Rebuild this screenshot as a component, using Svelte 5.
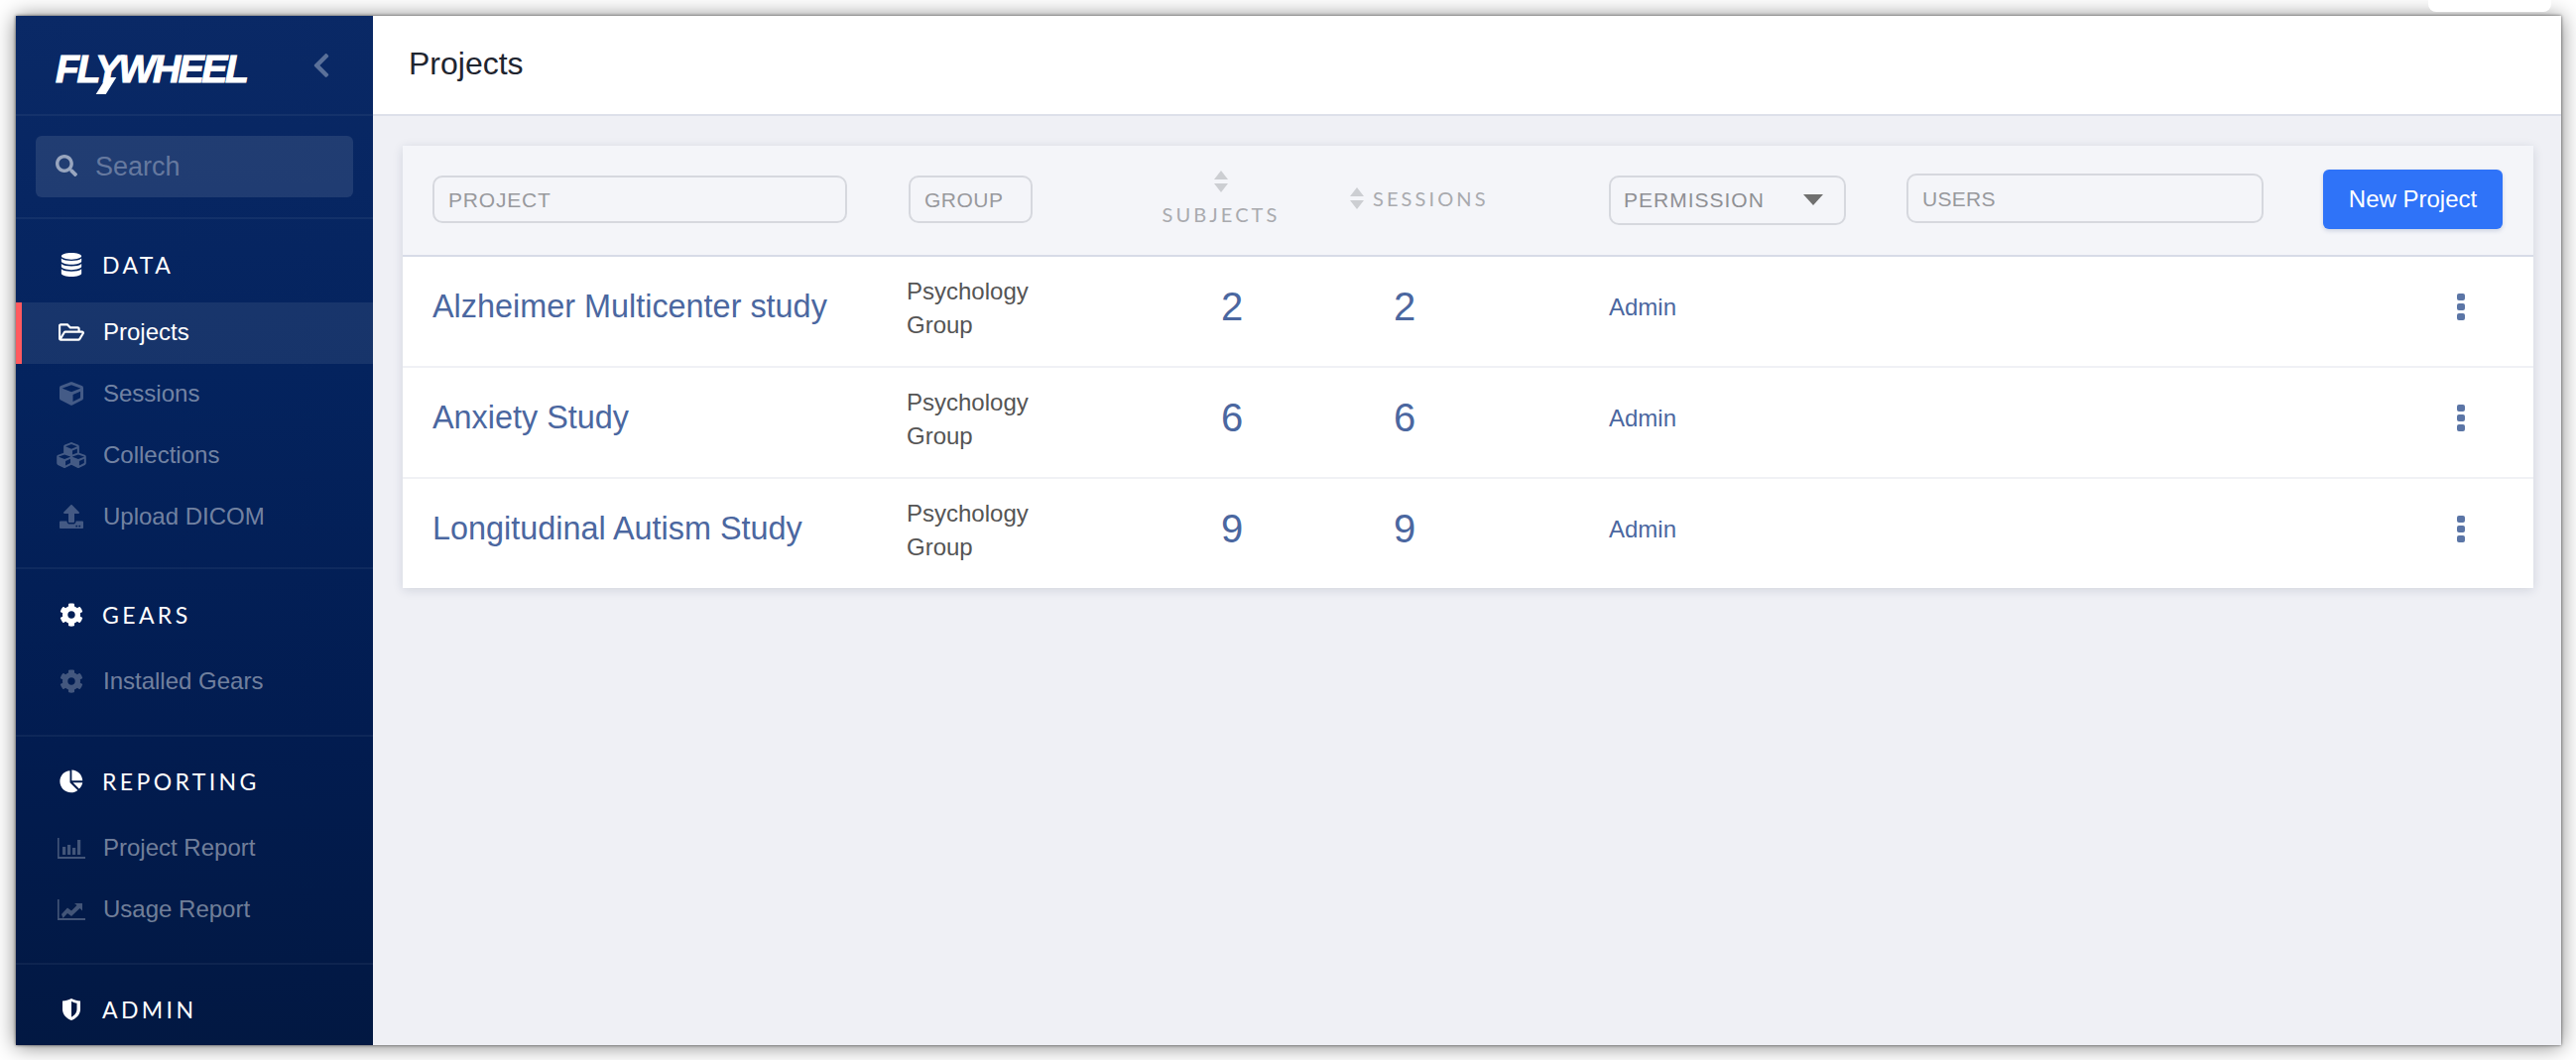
<script>
  const rows = [
    { name: 'Alzheimer Multicenter study', n: 2 },
    { name: 'Anxiety Study', n: 6 },
    { name: 'Longitudinal Autism Study', n: 9 }
  ];
  const P = {
    folder: ['0 64 576 384', 'M527.9 224H480v-48c0-26.5-21.5-48-48-48H272l-64-64H48C21.5 64 0 85.5 0 112v288c0 26.5 21.5 48 48 48h400c16.5 0 31.9-8.5 40.7-22.6l79.9-128c20-31.9-3-73.4-40.7-73.4zM48 118c0-3.3 2.7-6 6-6h134.1l64 64H426c3.3 0 6 2.7 6 6v42H152c-16.8 0-32.4 8.8-41.1 23.2L48 351.4zm400 282H72l77.2-128H528z'],
    cube: ['0 0 512 512', 'M239.1 6.3l-208 78c-18.7 7-31.1 25-31.1 45v225.1c0 18.2 10.3 34.8 26.5 42.9l208 104c13.5 6.8 29.4 6.8 42.9 0l208-104c16.3-8.1 26.5-24.8 26.5-42.9V129.3c0-20-12.4-37.9-31.1-44.9l-208-78C262 2.2 250 2.2 239.1 6.3zM256 68.4l192 72v1.1l-192 78-192-78v-1.1l192-72zm32 356V275.5l160-65v133.9l-160 80z'],
    cubes: ['0 30 512 450', 'M488.6 250.2L392 214V105.5c0-15-9.3-28.4-23.4-33.7l-100-37.5c-8.1-3.1-17.1-3.1-25.3 0l-100 37.5c-14.1 5.3-23.4 18.7-23.4 33.7V214l-96.6 36.2C9.3 255.5 0 268.9 0 283.9V394c0 13.6 7.7 26.1 19.9 32.2l100 50c10.1 5.1 22.1 5.1 32.2 0l103.9-52 103.9 52c10.1 5.1 22.1 5.1 32.2 0l100-50c12.2-6.1 19.9-18.6 19.9-32.2V283.9c0-15-9.3-28.4-23.4-33.7zM358 214.8l-85 31.9v-68.2l85-37v73.3zM154 104.1l102-38.2 102 38.2v.6l-102 41.4-102-41.4v-.6zm84 291.1l-85 42.5v-79.1l85-38.8v75.4zm0-112l-102 41.4-102-41.4v-.6l102-38.2 102 38.2v.6zm240 112l-85 42.5v-79.1l85-38.8v75.4zm0-112l-102 41.4-102-41.4v-.6l102-38.2 102 38.2v.6z'],
    upload: ['0 0 512 512', 'M296 384h-80c-13.3 0-24-10.7-24-24V192h-87.7c-17.8 0-26.7-21.5-14.1-34.1L242.3 5.7c7.5-7.5 19.8-7.5 27.3 0l152.2 152.2c12.6 12.6 3.7 34.1-14.1 34.1H320v168c0 13.3-10.7 24-24 24zm216-8v112c0 13.3-10.7 24-24 24H24c-13.3 0-24-10.7-24-24V376c0-13.3 10.7-24 24-24h136v8c0 30.9 25.1 56 56 56h80c30.9 0 56-25.1 56-56v-8h136c13.3 0 24 10.7 24 24zm-124 88c0-11-9-20-20-20s-20 9-20 20 9 20 20 20 20-9 20-20zm64 0c0-11-9-20-20-20s-20 9-20 20 9 20 20 20 20-9 20-20z'],
    cog: ['0 0 512 512', 'M487.4 315.7l-42.6-24.6c4.3-23.2 4.3-47 0-70.2l42.6-24.6c4.9-2.8 7.1-8.6 5.5-14-11.1-35.6-30-67.8-54.7-94.6-3.8-4.1-10-5.1-14.8-2.3L380.8 110c-17.9-15.4-38.5-27.3-60.8-35.1V25.8c0-5.6-3.9-10.5-9.4-11.7-36.7-8.2-74.3-7.8-109.2 0-5.5 1.2-9.4 6.1-9.4 11.7V75c-22.2 7.9-42.8 19.8-60.8 35.1L88.7 85.5c-4.9-2.8-11-1.9-14.8 2.3-24.7 26.7-43.6 58.9-54.7 94.6-1.7 5.4.6 11.2 5.5 14L67.3 221c-4.3 23.2-4.3 47 0 70.2l-42.6 24.6c-4.9 2.8-7.1 8.6-5.5 14 11.1 35.6 30 67.8 54.7 94.6 3.8 4.1 10 5.1 14.8 2.3l42.6-24.6c17.9 15.4 38.5 27.3 60.8 35.1v49.2c0 5.6 3.9 10.5 9.4 11.7 36.7 8.2 74.3 7.8 109.2 0 5.5-1.2 9.4-6.1 9.4-11.7v-49.2c22.2-7.9 42.8-19.8 60.8-35.1l42.6 24.6c4.9 2.8 11 1.9 14.8-2.3 24.7-26.7 43.6-58.9 54.7-94.6 1.5-5.5-.7-11.3-5.6-14.1zM256 336c-44.1 0-80-35.9-80-80s35.9-80 80-80 80 35.9 80 80-35.9 80-80 80z'],
    pie: ['0 0 512 512', 'M224 24C100 28 8 132 8 256c0 128 104 240 240 240 54 0 104-18 144-50L224 280zM264 8v232h232C492 112 392 12 264 8zM288 280l134 134c36-34 66-84 74-134z'],
    bars: ['0 0 28 21', 'M0 0h1.600v19H28v2H0zM5 9h3.200v8H5zM10 7h3.200v10H10zM15 10h3.200v7H15zM20 2h3.200v15H20z'],
    line: ['0 0 28 21', 'M0 0h1.600v19H28v2H0zM4 15l6-6.500 4 3 5.500-5.500-2.500-2h8v7.500l-2.500-2.500-8.500 8-4-3-4.500 5z'],
    shield: ['0 0 18 22', 'M0 2.500C3 2.500 6 1.500 9 0c3 1.500 6 2.500 9 2.500V11c0 5-4 9-9 11-5-2-9-6-9-11zM9 2.800v16c3-1.500 5.500-4.500 5.500-8V4.800C12.500 4.500 10.500 3.700 9 2.800z'],
    db: ['0 0 24 26', 'M12 0c6 0 11 1.600 11 3.600S18 7.200 12 7.200 1 5.600 1 3.600 6 0 12 0zM1 6c2 2 6.500 2.700 11 2.700S21 8 23 6v3.200c0 2-5 3.600-11 3.600S1 11.200 1 9.200zM1 11.800c2 2 6.500 2.700 11 2.700s9-.7 11-2.700V15c0 2-5 3.600-11 3.600S1 17 1 15zM1 17.600c2 2 6.500 2.700 11 2.700s9-.7 11-2.700v4.800C23 24.400 18 26 12 26S1 24.400 1 22.400z']
  };
  const sections = [
    { title: 'DATA', icon: 'db', items: [
      { label: 'Projects', icon: 'folder', active: true },
      { label: 'Sessions', icon: 'cube' },
      { label: 'Collections', icon: 'cubes' },
      { label: 'Upload DICOM', icon: 'upload' }
    ] },
    { title: 'GEARS', icon: 'cog', items: [{ label: 'Installed Gears', icon: 'cog' }] },
    { title: 'REPORTING', icon: 'pie', items: [
      { label: 'Project Report', icon: 'bars' },
      { label: 'Usage Report', icon: 'line' }
    ] },
    { title: 'ADMIN', icon: 'shield', items: [] }
  ];
</script>

<div class="page">
  <div class="tab"></div>
  <div class="window">
    <aside class="sidebar">
      <div class="brand">
        <span class="logo">FLYWHEEL</span>
        <svg class="chevron" viewBox="0 0 320 512"><path d="M34.52 239.03L228.87 44.69c9.37-9.37 24.57-9.37 33.94 0l22.67 22.67c9.36 9.36 9.37 24.52.04 33.9L131.49 256l154.02 154.75c9.34 9.38 9.32 24.54-.04 33.9l-22.67 22.67c-9.37 9.37-24.57 9.37-33.94 0L34.52 272.97c-9.37-9.37-9.37-24.57 0-33.94z"/></svg>
      </div>
      <div class="search-wrap">
        <div class="search">
          <svg class="search-icon" viewBox="0 0 512 512"><path d="M505 442.7L405.3 343c-4.5-4.5-10.6-7-17-7H372c27.6-35.3 44-79.7 44-128C416 93.1 322.9 0 208 0S0 93.1 0 208s93.1 208 208 208c48.3 0 92.7-16.4 128-44v16.3c0 6.4 2.5 12.5 7 17l99.7 99.7c9.4 9.4 24.6 9.4 33.9 0l28.3-28.3c9.4-9.4 9.4-24.6.1-34zM208 336c-70.7 0-128-57.2-128-128 0-70.7 57.2-128 128-128 70.7 0 128 57.2 128 128 0 70.7-57.2 128-128 128z"/></svg>
          <span>Search</span>
        </div>
      </div>
      {#each sections as s}
        <section class="nav-section">
          <div class="nav-head">
            <span class="ico"><svg class="ico-{s.icon}" viewBox={P[s.icon][0]}><path d={P[s.icon][1]}/></svg></span>
            <span class="nav-title">{s.title}</span>
          </div>
          {#each s.items as it}
            <div class="nav-item" class:active={it.active}>
              <span class="ico"><svg class="ico-{it.icon}" viewBox={P[it.icon][0]}><path d={P[it.icon][1]}/></svg></span>
              <span>{it.label}</span>
            </div>
          {/each}
        </section>
      {/each}
    </aside>

    <main class="main">
      <header class="topbar">Projects</header>
      <div class="card">
        <div class="grid head">
          <div class="cell"><div class="field f-project">PROJECT</div></div>
          <div class="cell"><div class="field f-group">GROUP</div></div>
          <div class="sort-stack">
            <svg class="sort" viewBox="0 0 14 22"><path d="M7 0l7 9H0zM7 22L0 13h14z"/></svg>
            <span class="sort-label">SUBJECTS</span>
          </div>
          <div class="sort-inline">
            <svg class="sort" viewBox="0 0 14 22"><path d="M7 0l7 9H0zM7 22L0 13h14z"/></svg>
            <span class="sort-label">SESSIONS</span>
          </div>
          <div class="cell perm-cell">
            <div class="field f-perm"><span>PERMISSION</span><i class="caret"></i></div>
          </div>
          <div class="cell"><div class="field f-users">USERS</div></div>
          <button class="new">New Project</button>
        </div>
        {#each rows as r}
          <div class="grid row">
            <a class="name" href="#top">{r.name}</a>
            <div class="group">Psychology<br />Group</div>
            <div class="num">{r.n}</div>
            <div class="num">{r.n}</div>
            <div class="perm">Admin</div>
            <div></div>
            <div class="kebab"><i></i><i></i><i></i></div>
          </div>
        {/each}
      </div>
    </main>
  </div>
</div>

<style>
  :global(body) { margin: 0; background: #fff; }
  .page {
    position: relative;
    box-sizing: border-box;
    width: 2597px;
    height: 1069px;
    padding: 16px 15px 15px 16px;
    overflow: hidden;
    font-family: "Liberation Sans", Arial, sans-serif;
  }
  .tab {
    position: absolute;
    top: 0;
    left: 2448px;
    width: 124px;
    height: 12px;
    background: #fff;
    border-radius: 0 0 8px 8px;
    z-index: 2;
  }
  .window {
    display: flex;
    height: 100%;
    background: #eff0f5;
    box-shadow: 0 0 3px rgba(0,0,0,.6), 0 1px 20px rgba(0,0,0,.5);
  }
  .sidebar {
    flex: 0 0 360px;
    background: linear-gradient(178deg, #0a2966 0%, #04235e 35%, #021c50 70%, #021842 100%);
    color: #fff;
  }
  .brand {
    box-sizing: border-box;
    height: 101px;
    display: flex;
    align-items: flex-start;
    justify-content: space-between;
    padding: 32px 40px 0 40px;
    border-bottom: 2px solid rgba(255,255,255,.05);
  }
  .logo {
    position: relative;
    font: italic 700 39px/44px "Liberation Sans", Arial, sans-serif;
    letter-spacing: -2.4px;
    -webkit-text-stroke: 1.1px #fff;
    color: #fff;
  }
  .logo::after {
    content: "";
    position: absolute;
    left: 46px;
    top: 30px;
    width: 10px;
    height: 17px;
    background: #fff;
    transform: skewX(-32deg);
  }
  .chevron { width: 26px; height: 28px; margin: 4px -1px 0 0; fill: #5a7099; }
  .search-wrap {
    box-sizing: border-box;
    height: 104px;
    padding: 20px;
    border-bottom: 2px solid rgba(255,255,255,.05);
  }
  .search {
    height: 62px;
    display: flex;
    align-items: center;
    gap: 18px;
    padding-left: 20px;
    background: rgba(255,255,255,.1);
    border-radius: 6px;
    color: #66799f;
    font-size: 27px;
  }
  .search-icon { width: 22px; height: 22px; fill: #99a6bf; margin-top: -2px; }
  .nav-section {
    box-sizing: border-box;
    padding: 14px 0 22px;
    border-bottom: 2px solid rgba(255,255,255,.05);
  }
  .nav-section:nth-of-type(1) { padding: 15px 0 19px; }
  .nav-section:nth-of-type(2) { padding-top: 15px; }
  .nav-section:last-child { border-bottom: 0; padding-bottom: 0; }
  .nav-head {
    height: 62px;
    margin-bottom: 6px;
    display: flex;
    align-items: center;
    color: #fff;
  }
  .nav-section:nth-of-type(1) .nav-head { margin-bottom: 7px; }
  .nav-head .ico { flex-basis: 87px; width: 87px; }
  .nav-title {
    font-family: Lato, sans-serif;
    font-size: 23px;
    letter-spacing: 3.4px;
  }
  .ico {
    flex: 0 0 88px;
    box-sizing: border-box;
    padding-left: 24px;
    display: flex;
    justify-content: center;
    width: 88px;
  }
  .ico svg { width: 24px; height: 24px; fill: currentColor; display: block; }
  .ico svg.ico-folder { width: 26px; height: 18px; }
  .ico svg.ico-bars, .ico svg.ico-line { width: 28px; height: 21px; }
  .ico svg.ico-cubes { width: 30px; height: 26px; }
  .ico svg.ico-shield { width: 18px; height: 22px; }
  .nav-item {
    box-sizing: border-box;
    height: 62px;
    padding-bottom: 2px;
    display: flex;
    align-items: center;
    font-size: 24px;
    color: rgba(255,255,255,.45);
  }
  .nav-item .ico { color: rgba(255,255,255,.26); }
  .nav-item.active {
    background: rgba(255,255,255,.08);
    color: #fff;
    box-shadow: inset 6px 0 0 #ff5a5f;
  }
  .nav-item.active .ico { color: #fff; }
  .main { flex: 1; min-width: 0; }
  .topbar {
    box-sizing: border-box;
    height: 101px;
    background: #fff;
    border-bottom: 2px solid #dde0ea;
    padding: 30px 0 0 36px;
    font-size: 32px;
    line-height: 36px;
    color: #1f2530;
  }
  .card {
    margin: 30px 28px 0 30px;
    background: #fff;
    box-shadow: 0 2px 10px rgba(30,40,80,.14);
  }
  .grid {
    display: grid;
    grid-template-columns: 478px 226px 204px 144px 434px 420px 181px;
    padding: 0 31px 0 30px;
    align-items: center;
  }
  .head {
    height: 110px;
    background: #f4f5f9;
    border-bottom: 2px solid #d7dbe7;
  }
  .row {
    box-sizing: content-box;
    height: 100px;
    padding-bottom: 10px;
    border-bottom: 2px solid #f0f1f5;
  }
  .row:last-child { border-bottom: 0; }
  .field {
    box-sizing: border-box;
    height: 48px;
    display: flex;
    align-items: center;
    border: 2px solid #d6d8de;
    border-radius: 10px;
    padding-left: 14px;
    color: #98999d;
    font-size: 21px;
    letter-spacing: .8px;
    margin-bottom: 2px;
  }
  .f-project { width: 418px; padding-top: 1px; }
  .f-group { width: 125px; margin-left: 2px; letter-spacing: .5px; padding-top: 1px; }
  .perm-cell { padding-left: 134px; }
  .f-perm {
    width: 239px;
    height: 50px;
    margin-bottom: 0;
    letter-spacing: 1px;
    justify-content: space-between;
    padding: 0 21px 0 13px;
    color: #8f9094;
  }
  .caret {
    width: 0;
    height: 0;
    border-left: 10px solid transparent;
    border-right: 10px solid transparent;
    border-top: 11px solid #707070;
    margin-top: -2px;
  }
  .f-users { width: 360px; height: 50px; margin-bottom: 4px; letter-spacing: .3px; padding-top: 2px; }
  .sort { width: 14px; height: 22px; fill: #ccced2; flex: none; }
  .sort-label {
    font-family: Lato, sans-serif;
    font-size: 20px;
    letter-spacing: 3.1px;
    color: #a9aaae;
    white-space: nowrap;
  }
  .sort-stack {
    display: flex;
    flex-direction: column;
    align-items: center;
    gap: 10px;
    margin-right: 22px;
    margin-top: -4px;
  }
  .sort-inline {
    display: flex;
    align-items: center;
    gap: 9px;
    padding-left: 17px;
    margin-bottom: 5px;
    white-space: nowrap;
  }
  .new {
    height: 60px;
    width: 181px;
    padding: 0;
    margin-bottom: 2px;
    border: 0;
    border-radius: 6px;
    background: #2f73f8;
    color: #fff;
    font: 24px "Liberation Sans", Arial, sans-serif;
    box-shadow: 0 2px 4px rgba(40,60,120,.18);
  }
  .name {
    font-size: 32.4px;
    color: #4b67a0;
    text-decoration: none;
    white-space: nowrap;
  }
  .group { font-size: 24px; line-height: 34px; color: #555; margin-top: 4px; }
  .num { font-size: 40px; color: #4b67a0; text-align: center; }
  .perm { font-size: 24px; color: #4b67a0; padding: 1px 0 0 134px; }
  .kebab {
    display: flex;
    flex-direction: column;
    align-items: flex-end;
    gap: 3px;
    padding-right: 38px;
  }
  .kebab i { display: block; width: 8px; height: 7px; border-radius: 2px; background: #5b75a6; }
</style>
